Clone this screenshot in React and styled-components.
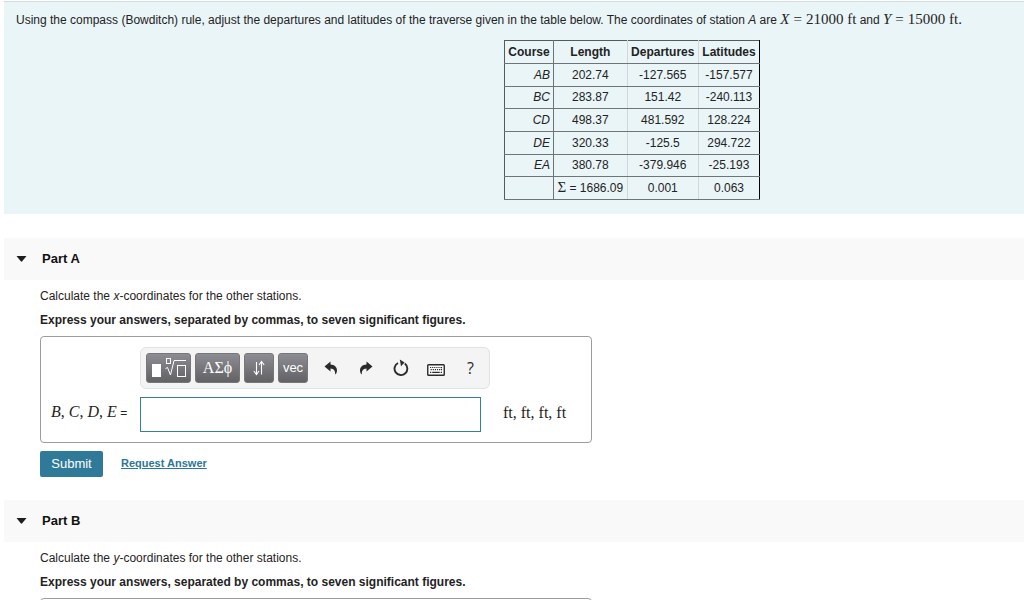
import React from "react";
import styled, { createGlobalStyle, css } from "styled-components";

const GlobalStyle = createGlobalStyle`
  *, *::before, *::after { box-sizing: border-box; }
  body {
    margin: 0;
    background: #fff;
    color: #1f2324;
    font: 12px/18px "Liberation Sans", Arial, sans-serif;
  }
`;

const serif = '"Liberation Serif", "Times New Roman", serif';

const Page = styled.main`
  height: 100vh;
  overflow: hidden;
  padding: 1px 0 0 4px;
`;

const Problem = styled.section`
  background: #e9f5f7;
  border-top: 1px solid #d3dddf;
  padding: 8px 12px 14px;
  margin-bottom: 24px;
`;

const Statement = styled.p`
  margin: 0 0 10px;
  line-height: 20px;
  white-space: nowrap;
`;

const MathText = styled.span`
  font-family: ${serif};
  font-size: 15px;
  line-height: 1;
`;

const Equals = styled.span`
  margin: 0 4px;
`;

const Table = styled.table`
  border-collapse: collapse;
  border: 1px solid #555b5d;
  border-right-color: #000;
  width: 256px;
  height: 160px;
  margin-left: 49%;
`;

const Cell = styled.td`
  height: 23px;
  padding: 0 3px;
  line-height: 18px;
  text-align: center;
  border-bottom: 1px solid #6f7476;
  border-right: 1px solid ${(p) => (p.$strong ? "#6f7476" : "#d0d8da")};
  &:last-child { border-right-color: #000; }
  tbody & { height: 22px; }
`;

const CourseCell = styled(Cell)`
  text-align: right;
  font-style: italic;
  font-weight: normal;
`;

const PartSection = styled.section`
  margin-bottom: 23px;
`;

const PartHeading = styled.h2`
  margin: 0;
  background: #f9f9f9;
`;

const Toggle = styled.button`
  display: flex;
  align-items: center;
  gap: 15px;
  width: 100%;
  height: 42px;
  padding: 0 12px;
  border: 0;
  background: none;
  color: #111;
  font: bold 13px/18px "Liberation Sans", Arial, sans-serif;
  text-align: left;
`;

const PartBody = styled.div`
  padding: 7px 36px 0;
`;

const Line = styled.p`
  margin: 0 0 6px;
  font-weight: ${(p) => (p.$bold ? "bold" : "normal")};
`;

const AnswerBox = styled.div`
  max-width: 552px;
  min-height: 107px;
  margin: 7px 0 8px;
  padding: 10px 20px 10px 10px;
  border: 1px solid #9c9c9c;
  border-radius: 4px;
  display: grid;
  grid-template-columns: 79px 341px 1fr;
  column-gap: 10px;
  row-gap: 8px;
  align-items: center;
`;

const Toolbar = styled.div`
  grid-column: 2 / 4;
  justify-self: start;
  display: flex;
  align-items: center;
  gap: 4px;
  width: 350px;
  height: 42px;
  padding: 0 5px;
  border: 1px solid #e2e2e2;
  border-radius: 6px;
  background: #f4f4f4;
`;

const PlainTools = styled.div`
  display: flex;
  gap: 4px;
  padding-left: 3px;
`;

const toolBase = css`
  display: flex;
  flex: none;
  align-items: center;
  justify-content: center;
  height: 30px;
  padding: 0;
`;

const DarkTool = styled.button`
  ${toolBase}
  width: ${(p) => (p.$wide ? 45 : 30)}px;
  border: 1px solid #77777b;
  border-radius: 3px;
  background: linear-gradient(#8c8c93, #626265);
  color: #fff;
  font-family: ${(p) => (p.$serif ? serif : '"Liberation Sans", Arial, sans-serif')};
  font-size: ${(p) => (p.$serif ? 16 : 13)}px;
  line-height: 18px;
`;

const PlainTool = styled.button`
  ${toolBase}
  width: 31px;
  border: 0;
  background: none;
  color: #2b2b2b;
  font: 16px/18px "Open Sans", sans-serif;
`;

const Label = styled.label`
  padding-bottom: 4px;
  white-space: nowrap;
`;

const AnswerInput = styled.input`
  width: 100%;
  height: 35px;
  padding: 0 8px;
  border: 1px solid #34809f;
  background: #fff;
  font: 16px/18px ${serif};
`;

const FieldMath = styled(MathText)`
  font-size: 16px;
`;

const Units = styled(FieldMath)`
  padding: 0 0 4px 12px;
  white-space: nowrap;
`;

const Actions = styled.div`
  display: flex;
  align-items: center;
  gap: 18px;
`;

const Submit = styled.button`
  width: 63px;
  height: 26px;
  padding: 0;
  border: 0;
  border-radius: 2px;
  background: #2f7a99;
  color: #fff;
  font: 13px/18px "Liberation Sans", Arial, sans-serif;
`;

const RequestLink = styled.a`
  padding-bottom: 3px;
  color: #2b7696;
  font-size: 11px;
  font-weight: bold;
`;

const rows = [
  ["AB", "202.74", "-127.565", "-157.577"],
  ["BC", "283.87", "151.42", "-240.113"],
  ["CD", "498.37", "481.592", "128.224"],
  ["DE", "320.33", "-125.5", "294.722"],
  ["EA", "380.78", "-379.946", "-25.193"],
];

const Caret = () => (
  <svg width="11" height="6" viewBox="0 0 11 6" aria-hidden="true">
    <path d="M0.5 0H10.5L6.2 5.3Q5.5 6 4.8 5.3Z" fill="#1d1d1d" />
  </svg>
);

const RootIcon = () => (
  <svg width="36" height="22" viewBox="0 0 36 22" aria-hidden="true">
    <rect x="1" y="7" width="9" height="13" fill="#fff" />
    <g fill="none" stroke="#fff">
      <rect x="15.5" y="1.5" width="4" height="5" />
      <path d="M14.5 11.5L16.5 10.5L19.5 18L23 3.5H35" />
      <rect x="26.5" y="8.5" width="8" height="11" />
    </g>
  </svg>
);

const ArrowsIcon = () => (
  <svg width="12" height="16" viewBox="0 0 12 16" aria-hidden="true">
    <path
      d="M3.5 2V14.5M0.8 11L3.5 14.5L6 11M8.5 14.5V1.5M6 5L8.5 1.5L11.2 5"
      fill="none"
      stroke="#fff"
      strokeWidth="1.1"
    />
  </svg>
);

const UndoArrow = ({ flip }) => (
  <svg width="14" height="14" viewBox="0 0 14 14" aria-hidden="true">
    <path
      transform={flip ? "translate(14 0) scale(-1 1)" : undefined}
      d="M0.5 5.5L6.5 0.5V3.6C10.5 3.8 13 6.2 13 9.5C13 11.4 12.2 12.8 11.2 13.6C11.4 10 10 7.6 6.5 7.5V10.5Z"
      fill="#2b2b2b"
    />
  </svg>
);

const ResetIcon = () => (
  <svg width="16" height="18" viewBox="0 0 16 18" aria-hidden="true">
    <path d="M11.8 4.6A6.4 6.4 0 1 1 5 4" fill="none" stroke="#2b2b2b" strokeWidth="1.9" />
    <path d="M6.8 0.4L11.6 3.4L8 7.2Z" fill="#2b2b2b" />
  </svg>
);

const KeyboardIcon = () => (
  <svg width="18" height="16" viewBox="0 -4 18 16" aria-hidden="true">
    <rect x="0.75" y="0.75" width="16.5" height="10.5" rx="0.8" fill="#fff" stroke="#2b2b2b" strokeWidth="1.4" />
    <path
      d="M3 3.5H15M3.6 5.6H13.5M14.5 3V6.3"
      stroke="#2b2b2b"
      strokeWidth="1.2"
      strokeDasharray="1.2 0.9"
    />
    <path d="M3 8.3H4.3M5.2 8.3H12.8M13.7 8.3H15" stroke="#2b2b2b" strokeWidth="1.3" />
  </svg>
);

function Part({ name, axis, children }) {
  return (
    <PartSection>
      <PartHeading>
        <Toggle type="button" aria-expanded="true">
          <Caret />
          Part {name}
        </Toggle>
      </PartHeading>
      <PartBody>
        <Line>
          Calculate the <i>{axis}</i>-coordinates for the other stations.
        </Line>
        <Line $bold>Express your answers, separated by commas, to seven significant figures.</Line>
        {children}
      </PartBody>
    </PartSection>
  );
}

function AnswerForm() {
  return (
    <form onSubmit={(e) => e.preventDefault()}>
      <AnswerBox>
        <Toolbar role="toolbar" aria-label="Equation tools">
          <DarkTool type="button" $wide aria-label="Templates"><RootIcon /></DarkTool>
          <DarkTool type="button" $wide $serif>ΑΣϕ</DarkTool>
          <DarkTool type="button" aria-label="Arrows"><ArrowsIcon /></DarkTool>
          <DarkTool type="button">vec</DarkTool>
          <PlainTools>
            <PlainTool type="button" aria-label="Undo"><UndoArrow /></PlainTool>
            <PlainTool type="button" aria-label="Redo"><UndoArrow flip /></PlainTool>
            <PlainTool type="button" aria-label="Reset"><ResetIcon /></PlainTool>
            <PlainTool type="button" aria-label="Keyboard"><KeyboardIcon /></PlainTool>
            <PlainTool type="button">?</PlainTool>
          </PlainTools>
        </Toolbar>
        <Label htmlFor="answer-a">
          <FieldMath><i>B</i>, <i>C</i>, <i>D</i>, <i>E</i></FieldMath> =
        </Label>
        <AnswerInput id="answer-a" type="text" />
        <Units>ft, ft, ft, ft</Units>
      </AnswerBox>
      <Actions>
        <Submit type="submit">Submit</Submit>
        <RequestLink href="#request">Request Answer</RequestLink>
      </Actions>
    </form>
  );
}

export default function App() {
  return (
    <>
      <GlobalStyle />
      <Page>
        <Problem>
          <Statement>
            Using the compass (Bowditch) rule, adjust the departures and latitudes of the traverse given in the
            table below. The coordinates of station <i>A</i> are{" "}
            <MathText><i>X</i><Equals>=</Equals>21000 ft</MathText> and{" "}
            <MathText><i>Y</i><Equals>=</Equals>15000 ft.</MathText>
          </Statement>
          <Table>
            <thead>
              <tr>
                <Cell as="th" scope="col" $strong>Course</Cell>
                <Cell as="th" scope="col">Length</Cell>
                <Cell as="th" scope="col">Departures</Cell>
                <Cell as="th" scope="col">Latitudes</Cell>
              </tr>
            </thead>
            <tbody>
              {rows.map(([course, length, dep, lat]) => (
                <tr key={course}>
                  <CourseCell as="th" scope="row" $strong>{course}</CourseCell>
                  <Cell>{length}</Cell>
                  <Cell>{dep}</Cell>
                  <Cell>{lat}</Cell>
                </tr>
              ))}
              <tr>
                <CourseCell $strong />
                <Cell><MathText>Σ</MathText> = 1686.09</Cell>
                <Cell>0.001</Cell>
                <Cell>0.063</Cell>
              </tr>
            </tbody>
          </Table>
        </Problem>
        <Part name="A" axis="x">
          <AnswerForm />
        </Part>
        <Part name="B" axis="y">
          <AnswerBox />
        </Part>
      </Page>
    </>
  );
}
